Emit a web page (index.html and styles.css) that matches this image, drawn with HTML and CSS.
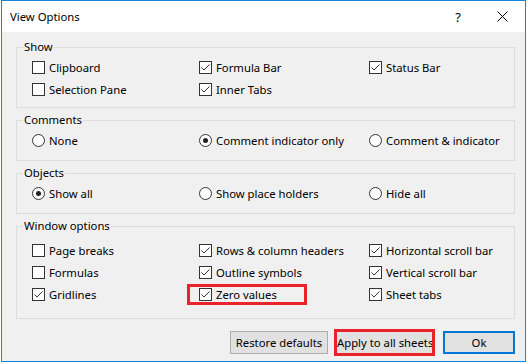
FILE: index.html
```html
<!DOCTYPE html>
<html>
<head>
<meta charset="utf-8">
<title>View Options</title>
<link rel="stylesheet" href="styles.css">
</head>
<body>
<div class="window">
  <div class="titlebar">
    <span class="title">View Options</span>
    <span class="help">?</span>
    <span class="close"><svg width="11" height="11" viewBox="0 0 11 11"><path d="M0.5 0.5 L10.5 10.5 M10.5 0.5 L0.5 10.5" stroke="#000" stroke-width="1" fill="none"/></svg></span>
  </div>
  <div class="content">
    <fieldset class="group">
      <legend>Show</legend>
      <div class="grid">
        <label class="item"><span class="cb"></span>Clipboard</label>
        <label class="item"><span class="cb"><svg viewBox="0 0 11 11"><path d="M1.5 5.5 L4 8 L9.5 2.5" stroke="#333" fill="none"/></svg></span>Formula Bar</label>
        <label class="item"><span class="cb"><svg viewBox="0 0 11 11"><path d="M1.5 5.5 L4 8 L9.5 2.5" stroke="#333" fill="none"/></svg></span>Status Bar</label>
        <label class="item"><span class="cb"></span>Selection Pane</label>
        <label class="item"><span class="cb"><svg viewBox="0 0 11 11"><path d="M1.5 5.5 L4 8 L9.5 2.5" stroke="#333" fill="none"/></svg></span>Inner Tabs</label>
      </div>
    </fieldset>
    <fieldset class="group comments">
      <legend>Comments</legend>
      <div class="grid">
        <label class="item"><span class="rb"></span>None</label>
        <label class="item"><span class="rb on"></span>Comment indicator only</label>
        <label class="item"><span class="rb"></span>Comment &amp; indicator</label>
      </div>
    </fieldset>
    <fieldset class="group objects">
      <legend>Objects</legend>
      <div class="grid">
        <label class="item"><span class="rb on"></span>Show all</label>
        <label class="item"><span class="rb"></span>Show place holders</label>
        <label class="item"><span class="rb"></span>Hide all</label>
      </div>
    </fieldset>
    <fieldset class="group window-opts">
      <legend>Window options</legend>
      <div class="grid">
        <label class="item"><span class="cb"></span>Page breaks</label>
        <label class="item"><span class="cb"><svg viewBox="0 0 11 11"><path d="M1.5 5.5 L4 8 L9.5 2.5" stroke="#333" fill="none"/></svg></span>Rows &amp; column headers</label>
        <label class="item"><span class="cb"><svg viewBox="0 0 11 11"><path d="M1.5 5.5 L4 8 L9.5 2.5" stroke="#333" fill="none"/></svg></span>Horizontal scroll bar</label>
        <label class="item"><span class="cb"></span>Formulas</label>
        <label class="item"><span class="cb"><svg viewBox="0 0 11 11"><path d="M1.5 5.5 L4 8 L9.5 2.5" stroke="#333" fill="none"/></svg></span>Outline symbols</label>
        <label class="item"><span class="cb"><svg viewBox="0 0 11 11"><path d="M1.5 5.5 L4 8 L9.5 2.5" stroke="#333" fill="none"/></svg></span>Vertical scroll bar</label>
        <label class="item"><span class="cb"><svg viewBox="0 0 11 11"><path d="M1.5 5.5 L4 8 L9.5 2.5" stroke="#333" fill="none"/></svg></span>Gridlines</label>
        <label class="item marked"><span class="cb"><svg viewBox="0 0 11 11"><path d="M1.5 5.5 L4 8 L9.5 2.5" stroke="#333" fill="none"/></svg></span>Zero values<span class="mark"></span></label>
        <label class="item"><span class="cb"><svg viewBox="0 0 11 11"><path d="M1.5 5.5 L4 8 L9.5 2.5" stroke="#333" fill="none"/></svg></span>Sheet tabs</label>
      </div>
    </fieldset>
    <div class="buttons">
      <button class="btn restore">Restore defaults</button>
      <button class="btn apply">Apply to all sheets</button>
      <button class="btn ok">Ok</button>
    </div>
  </div>
</div>
</body>
</html>
```

FILE: styles.css
```css
html, body {
  margin: 0;
  padding: 0;
  background: #ffffff;
}

body {
  font-family: "Noto Sans", "Open Sans", sans-serif;
  font-size: 11.3px;
  color: #000;
}

.window {
  margin-left: 1px;
  width: 525px;
  height: 362px;
  box-sizing: border-box;
  border: 1px solid #1883d7;
  background: #f0f0f0;
  display: flex;
  flex-direction: column;
}

.titlebar {
  height: 31px;
  flex: none;
  background: #ffffff;
  display: flex;
  align-items: center;
  padding: 0 17px 0 8px;
}

.title {
  flex: 1;
  line-height: 16px;
}

.help {
  width: 10px;
  text-align: center;
  font-size: 13px;
  line-height: 16px;
  margin-right: 34px;
}

.close {
  display: flex;
  width: 11px;
  height: 11px;
}

.content {
  flex: 1;
  padding: 7px 10px 0 14px;
  display: flex;
  flex-direction: column;
}

.group {
  margin: 0;
  min-width: 0;
  border: 1px solid #dcdcdc;
  padding: 1px 0 7px 15px;
}

.group + .group {
  margin-top: 4px;
}

.group.comments,
.group.objects {
  padding-bottom: 9px;
}

.group.window-opts {
  padding-top: 5px;
  padding-bottom: 13px;
}

.group legend {
  padding: 0 1px;
  margin-left: -9px;
  line-height: 16px;
}

.grid {
  display: grid;
  grid-template-columns: 167px 170px 1fr;
  grid-auto-rows: 22px;
}

.item {
  display: flex;
  align-items: center;
  gap: 4px;
  white-space: nowrap;
  position: relative;
}

.cb {
  width: 13px;
  height: 13px;
  box-sizing: border-box;
  border: 1px solid #333333;
  background: #ffffff;
  display: flex;
  flex: none;
}

.cb svg {
  width: 11px;
  height: 11px;
}

.rb {
  width: 13px;
  height: 13px;
  box-sizing: border-box;
  border: 1px solid #333333;
  border-radius: 50%;
  background: #ffffff;
  display: flex;
  align-items: center;
  justify-content: center;
  flex: none;
}

.rb.on::after {
  content: "";
  width: 5px;
  height: 5px;
  border-radius: 50%;
  background: #222222;
}

.mark {
  position: absolute;
  left: -12px;
  top: 1px;
  width: 120px;
  height: 21px;
  box-sizing: border-box;
  border: 3px solid #e8232b;
}

.buttons {
  margin-top: 12px;
  display: flex;
  justify-content: flex-end;
}

.btn {
  height: 23px;
  box-sizing: border-box;
  border: 1px solid #adadad;
  background: #e1e1e1;
  font-family: inherit;
  font-size: 11.3px;
  color: #000;
  padding: 0;
  margin: 0;
  white-space: nowrap;
}

.btn.restore {
  width: 98px;
}

.btn.apply {
  width: 97px;
  margin-left: 8px;
  outline: 3px solid #e8232b;
  outline-offset: -1px;
}

.btn.ok {
  width: 72px;
  margin-left: 10px;
  border: 2px solid #0078d7;
}
```
